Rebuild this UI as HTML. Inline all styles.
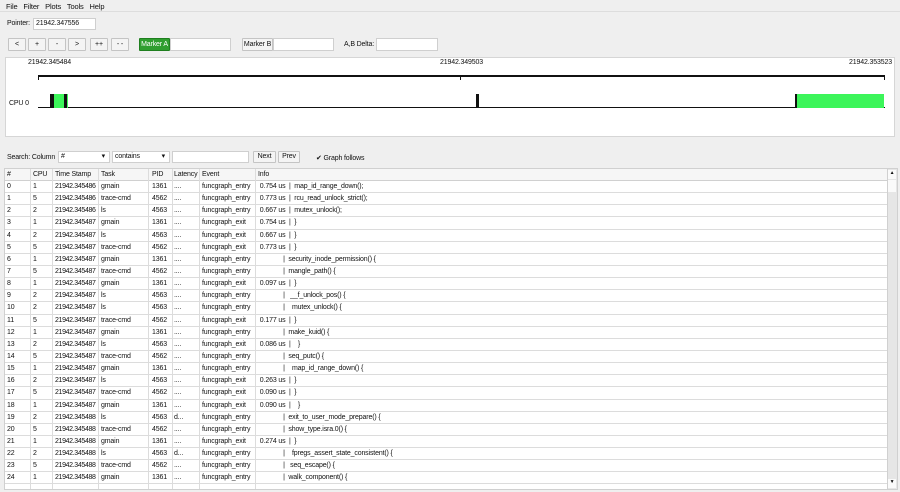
<!DOCTYPE html>
<html><head><meta charset="utf-8"><style>
*{margin:0;padding:0;box-sizing:border-box}
body{width:900px;height:492px;background:#efefef;font-family:"Liberation Sans",sans-serif;font-size:7px;color:#111;position:relative;overflow:hidden;letter-spacing:-0.15px}
.a{position:absolute}
.in{position:absolute;background:#fff;border:1px solid #cfcfcf}
.btn{position:absolute;background:#f4f4f4;border:1px solid #c4c4c4;border-radius:1px;text-align:center;line-height:11px;font-size:7px}
.row{position:absolute;left:5px;width:882px;height:12.14px;background:#fff;border-bottom:1px solid #dcdcdc}
.row span,.hd span{position:absolute;top:0;line-height:11.5px;white-space:pre}
.vl{position:absolute;top:169px;height:320px;width:1px;background:#dcdcdc}
</style></head><body>
<div class="a" style="left:0;top:0;width:900px;height:12px;border-bottom:1px solid #ddd"></div>
<div class="a" style="left:6px;top:2px;font-size:7.5px;word-spacing:4px">File Filter Plots Tools Help</div>
<div class="a" style="left:7px;top:20px">Pointer:</div>
<div class="in" style="left:33px;top:18px;width:63px;height:12px;padding-left:2px;line-height:10px">21942.347556</div>
<div class="btn" style="left:8px;top:38px;width:18px;height:13px">&lt;</div>
<div class="btn" style="left:28px;top:38px;width:18px;height:13px">+</div>
<div class="btn" style="left:48px;top:38px;width:18px;height:13px">-</div>
<div class="btn" style="left:68px;top:38px;width:18px;height:13px">&gt;</div>
<div class="btn" style="left:90px;top:38px;width:18px;height:13px">++</div>
<div class="btn" style="left:111px;top:38px;width:18px;height:13px">- -</div>
<div class="btn" style="left:139px;top:38px;width:31px;height:13px;background:#2f9e2f;border-color:#1f7f1f;color:#fff">Marker A</div>
<div class="in" style="left:170px;top:38px;width:61px;height:13px"></div>
<div class="btn" style="left:242px;top:38px;width:31px;height:13px">Marker B</div>
<div class="in" style="left:273px;top:38px;width:61px;height:13px"></div>
<div class="a" style="left:344px;top:41px">A,B Delta:</div>
<div class="in" style="left:376px;top:38px;width:62px;height:13px"></div>
<div class="a" style="left:5px;top:57px;width:890px;height:80px;background:#fff;border:1px solid #d6d6d6"></div>
<div class="a" style="left:28px;top:59px">21942.345484</div>
<div class="a" style="left:440px;top:59px">21942.349503</div>
<div class="a" style="left:849px;top:59px">21942.353523</div>
<div class="a" style="left:38px;top:75px;width:847px;height:2px;background:#111"></div>
<div class="a" style="left:38px;top:75px;width:1px;height:5px;background:#111"></div>
<div class="a" style="left:460px;top:75px;width:1px;height:5px;background:#111"></div>
<div class="a" style="left:884px;top:75px;width:1px;height:5px;background:#111"></div>
<div class="a" style="left:9px;top:100px">CPU 0</div>
<div class="a" style="left:38px;top:107px;width:847px;height:1px;background:#111"></div>
<div class="a" style="left:50px;top:94px;width:18px;height:14px;background:#3cf55a"></div>
<div class="a" style="left:50px;top:94px;width:4px;height:14px;background:#111"></div>
<div class="a" style="left:64px;top:94px;width:3px;height:14px;background:#111"></div>
<div class="a" style="left:476px;top:94px;width:3px;height:14px;background:#111"></div>
<div class="a" style="left:795px;top:94px;width:2px;height:14px;background:#111"></div>
<div class="a" style="left:797px;top:94px;width:87px;height:14px;background:#3cf55a"></div>
<div class="a" style="left:7px;top:154px">Search: Column</div>
<div class="in" style="left:58px;top:151px;width:52px;height:12px;padding-left:2px;line-height:10px">#<span style="position:absolute;right:4px">▾</span></div>
<div class="in" style="left:112px;top:151px;width:58px;height:12px;padding-left:2px;line-height:10px">contains<span style="position:absolute;right:4px">▾</span></div>
<div class="in" style="left:172px;top:151px;width:77px;height:12px"></div>
<div class="btn" style="left:253px;top:151px;width:23px;height:12px;line-height:10px">Next</div>
<div class="btn" style="left:278px;top:151px;width:22px;height:12px;line-height:10px">Prev</div>
<div class="a" style="left:316px;top:154px">✔ Graph follows</div>
<div class="a" style="left:4px;top:168px;width:894px;height:322px;border:1px solid #d0d0d0;background:#fff"></div>
<div class="hd a" style="left:5px;top:169px;width:882px;height:12px;background:#f6f6f6;border-bottom:1px solid #d0d0d0">
<span style="left:2px">#</span><span style="left:28px">CPU</span><span style="left:50px">Time Stamp</span><span style="left:96px">Task</span><span style="left:147px">PID</span><span style="left:169px">Latency</span><span style="left:197px">Event</span><span style="left:253px">Info</span></div>
<div id="rows"></div>
<div class="vl" style="left:30px"></div><div class="vl" style="left:52px"></div><div class="vl" style="left:98px"></div><div class="vl" style="left:148px"></div><div class="vl" style="left:172px"></div><div class="vl" style="left:199px"></div><div class="vl" style="left:255px"></div>
<div class="a" style="left:887px;top:169px;width:10px;height:320px;background:#e6e6e6;border-left:1px solid #d0d0d0"></div>
<div class="a" style="left:888px;top:170px;width:8px;height:9px;background:#fafafa;font-size:5px;text-align:center">▲</div>
<div class="a" style="left:888px;top:180px;width:8px;height:12px;background:#fafafa"></div>
<div class="a" style="left:888px;top:479px;width:8px;height:9px;background:#fafafa;font-size:5px;text-align:center">▼</div>
<script>
var d=[
["0","1","21942.345486","gmain","1361","....","funcgraph_entry"," 0.754 us  |  map_id_range_down();"],
["1","5","21942.345486","trace-cmd","4562","....","funcgraph_entry"," 0.773 us  |  rcu_read_unlock_strict();"],
["2","2","21942.345486","ls","4563","....","funcgraph_entry"," 0.667 us  |  mutex_unlock();"],
["3","1","21942.345487","gmain","1361","....","funcgraph_exit"," 0.754 us  |  }"],
["4","2","21942.345487","ls","4563","....","funcgraph_exit"," 0.667 us  |  }"],
["5","5","21942.345487","trace-cmd","4562","....","funcgraph_exit"," 0.773 us  |  }"],
["6","1","21942.345487","gmain","1361","....","funcgraph_entry","              |  security_inode_permission() {"],
["7","5","21942.345487","trace-cmd","4562","....","funcgraph_entry","              |  mangle_path() {"],
["8","1","21942.345487","gmain","1361","....","funcgraph_exit"," 0.097 us  |  }"],
["9","2","21942.345487","ls","4563","....","funcgraph_entry","              |   __f_unlock_pos() {"],
["10","2","21942.345487","ls","4563","....","funcgraph_entry","              |    mutex_unlock() {"],
["11","5","21942.345487","trace-cmd","4562","....","funcgraph_exit"," 0.177 us  |  }"],
["12","1","21942.345487","gmain","1361","....","funcgraph_entry","              |  make_kuid() {"],
["13","2","21942.345487","ls","4563","....","funcgraph_exit"," 0.086 us  |    }"],
["14","5","21942.345487","trace-cmd","4562","....","funcgraph_entry","              |  seq_putc() {"],
["15","1","21942.345487","gmain","1361","....","funcgraph_entry","              |    map_id_range_down() {"],
["16","2","21942.345487","ls","4563","....","funcgraph_exit"," 0.263 us  |  }"],
["17","5","21942.345487","trace-cmd","4562","....","funcgraph_exit"," 0.090 us  |  }"],
["18","1","21942.345487","gmain","1361","....","funcgraph_exit"," 0.090 us  |    }"],
["19","2","21942.345488","ls","4563","d...","funcgraph_entry","              |  exit_to_user_mode_prepare() {"],
["20","5","21942.345488","trace-cmd","4562","....","funcgraph_entry","              |  show_type.isra.0() {"],
["21","1","21942.345488","gmain","1361","....","funcgraph_exit"," 0.274 us  |  }"],
["22","2","21942.345488","ls","4563","d...","funcgraph_entry","              |    fpregs_assert_state_consistent() {"],
["23","5","21942.345488","trace-cmd","4562","....","funcgraph_entry","              |   seq_escape() {"],
["24","1","21942.345488","gmain","1361","....","funcgraph_entry","              |  walk_component() {"]];
var L=[2,28,50,96,147,169,197,253],h="";
d.forEach(function(r,i){h+='<div class="row" style="top:'+(181+i*12.14)+'px">';r.forEach(function(c,j){h+='<span style="left:'+L[j]+'px'+(j==2?';letter-spacing:-0.35px':'')+'">'+c+'</span>';});h+='</div>';});
document.getElementById('rows').innerHTML=h;
</script>
</body></html>
